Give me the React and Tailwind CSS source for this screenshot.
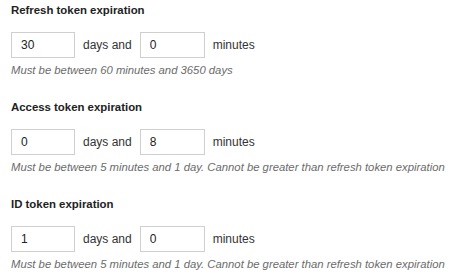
const sections = [
  {
    title: "Refresh token expiration",
    days: "30",
    minutes: "0",
    help: "Must be between 60 minutes and 3650 days",
  },
  {
    title: "Access token expiration",
    days: "0",
    minutes: "8",
    help: "Must be between 5 minutes and 1 day. Cannot be greater than refresh token expiration",
  },
  {
    title: "ID token expiration",
    days: "1",
    minutes: "0",
    help: "Must be between 5 minutes and 1 day. Cannot be greater than refresh token expiration",
  },
];

const App = () => {
  return (
    <div
      className="min-h-screen bg-white pl-[11px] text-[#333]"
      style={{ fontFamily: '"Liberation Sans", Arial, sans-serif' }}
    >
      {sections.map((s, i) => (
        <div key={s.title} className={i === 0 ? "" : "mt-[19px]"}>
          <h3 className="text-[11.4px] font-bold leading-[20px] text-[#222]">
            {s.title}
          </h3>
          <div className="mt-[12px] flex items-center text-[12px]">
            <input
              defaultValue={s.days}
              className="h-[26px] w-[64px] border border-[#cfcfcf] px-[9px] text-[12px] text-[#222] outline-none"
            />
            <span className="mx-[8px]">days and</span>
            <input
              defaultValue={s.minutes}
              className="h-[26px] w-[65px] border border-[#cfcfcf] px-[9px] text-[12px] text-[#222] outline-none"
            />
            <span className="ml-[8px]">minutes</span>
          </div>
          <p className="mt-[4px] text-[11.3px] italic leading-[16px] text-[#6b6b6b]">
            {s.help}
          </p>
        </div>
      ))}
    </div>
  );
};

export default App;
